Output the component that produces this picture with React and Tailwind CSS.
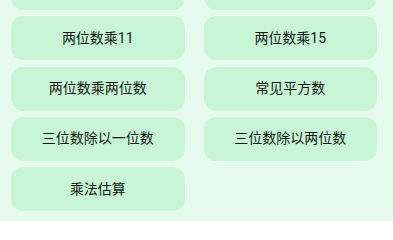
const items = [
  "",
  "",
  "两位数乘11",
  "两位数乘15",
  "两位数乘两位数",
  "常见平方数",
  "三位数除以一位数",
  "三位数除以两位数",
  "乘法估算",
];

export default function App() {
  return (
    <div
      className="h-[221px] w-[393px] overflow-hidden bg-[#e6faee]"
      style={{ fontFamily: 'Roboto, "Noto Sans CJK SC", sans-serif' }}
    >
      <div className="mt-[-34px] grid grid-cols-2 gap-x-[19px] gap-y-[6.3px] pl-[11px] pr-[16px]">
        {items.map((label, i) => (
          <button
            key={i}
            className="flex h-11 items-center justify-center rounded-xl bg-[#c8f5d5] text-[14px] text-[#151a16] shadow-[0_0_2px_rgba(255,255,255,0.8)]"
          >
            {label}
          </button>
        ))}
      </div>
    </div>
  );
}
